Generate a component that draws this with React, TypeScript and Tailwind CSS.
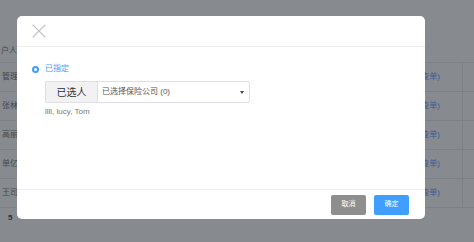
import { X } from "lucide-react";

const rows = [
  { name: "管理员", link: "(查单)" },
  { name: "张林", link: "(查单)" },
  { name: "高丽", link: "(查单)" },
  { name: "单亿", link: "(查单)" },
  { name: "王司尔", link: "(查单)" },
];

// Tableau en arrière-plan, sous le voile
function BackgroundTable() {
  return (
    <div className="pt-[40px] flex flex-col">
      <div className="h-[23px] flex items-center border-b border-[#7d8085]">
        <span className="ml-[1px] text-[8px] text-[#45484d]">户人员</span>
      </div>
      {rows.map((r, i) => (
        <div
          key={i}
          className="h-[29px] flex items-center justify-between border-b border-[#7d8085]"
        >
          <span className="ml-[2px] text-[8px] text-[#45484d]">{r.name}</span>
          <div className="flex items-center h-full">
            <span className="text-[8px] text-[#3a5f95] mr-[22px]">{r.link}</span>
            <div className="w-px h-full bg-[#7d8085] mr-[11px]" />
          </div>
        </div>
      ))}
      <div className="h-[20px] flex items-center">
        <span className="ml-[8px] text-[8px] font-bold text-[#2f3135]">5</span>
      </div>
    </div>
  );
}

export default function App() {
  return (
    <div
      className="relative w-[474px] h-[242px] overflow-hidden bg-[#878a8f]"
      style={{ fontFamily: '"Liberation Sans", "Noto Sans CJK SC", sans-serif' }}
    >
      <BackgroundTable />

      {/* Modale */}
      <div className="absolute left-[17px] top-[16px] w-[408px] h-[203px] bg-white rounded-[5px] flex flex-col">
        {/* Header */}
        <div className="h-[31px] flex items-center pl-[10px] border-b border-[#eeeeee]">
          <X className="w-[24px] h-[24px] text-[#c4c4c4]" strokeWidth={1.1} />
        </div>

        {/* Body */}
        <div className="flex-1 flex flex-col pt-[17px] pl-[15px]">
          <div className="flex items-center gap-[6px]">
            <span className="w-[7px] h-[7px] rounded-full bg-[#409eff] flex items-center justify-center">
              <span className="w-[3px] h-[3px] rounded-full bg-white" />
            </span>
            <span className="text-[8px] leading-[10px] text-[#409eff]">已指定</span>
          </div>

          <div className="ml-[13px] mt-[7px] w-[205px] h-[22px] flex border border-[#dcdfe6] rounded-[2px]">
            <div className="w-[52px] bg-[#f2f2f2] border-r border-[#dcdfe6] flex items-center justify-center text-[10px] text-[#333333]">
              已选人
            </div>
            <div className="flex-1 flex items-center justify-between pl-[4px] pr-[5px]">
              <span className="text-[8px] text-[#555555]">已选择保险公司 (0)</span>
              <span className="w-0 h-0 border-l-[2px] border-r-[2px] border-t-[3px] border-l-transparent border-r-transparent border-t-[#444444]" />
            </div>
          </div>

          <div className="ml-[13px] mt-[3px] text-[8px] text-[#777777]">llll, lucy, Tom</div>
        </div>

        {/* Footer */}
        <div className="h-[30px] border-t border-[#eeeeee] flex items-center justify-end gap-[8px] pr-[16px]">
          <button className="w-[35px] h-[20px] rounded-[2px] bg-[#8e8e8e] text-white text-[7px]">
            取消
          </button>
          <button className="w-[35px] h-[20px] rounded-[2px] bg-[#409eff] text-white text-[7px]">
            确定
          </button>
        </div>
      </div>
    </div>
  );
}
